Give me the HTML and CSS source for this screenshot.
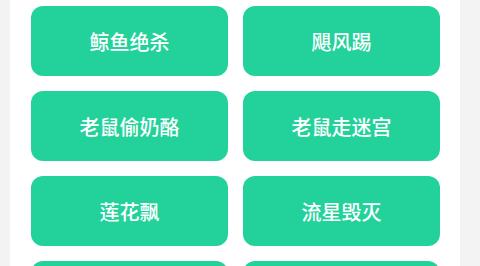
FILE: index.html
```html
<!DOCTYPE html>
<html lang="zh">
<head>
    <meta charset="UTF-8">
    <meta name="viewport" content="width=device-width, initial-scale=1.0">
    <title>动作列表</title>
    <link rel="stylesheet" href="styles.css">
</head>
<body>
    <div class="panel">
        <div class="grid">
            <button class="action">鲸鱼绝杀</button>
            <button class="action">飓风踢</button>
            <button class="action">老鼠偷奶酪</button>
            <button class="action">老鼠走迷宫</button>
            <button class="action">莲花飘</button>
            <button class="action">流星毁灭</button>
            <button class="action"></button>
            <button class="action"></button>
        </div>
    </div>
</body>
</html>
```

FILE: styles.css
```css
body {
    margin: 0;
    background-color: #f3f3f3;
    font-family: "Noto Sans CJK SC", "Noto Sans", sans-serif;
}
.panel {
    margin-left: 10px;
    width: 450px;
    min-height: 266px;
    background: #fff;
    padding: 6px 20px 0 21px;
    box-sizing: border-box;
}
.grid {
    display: grid;
    grid-template-columns: 1fr 1fr;
    gap: 15px;
}
.action {
    height: 70px;
    border: none;
    border-radius: 12px;
    background-color: #23d29a;
    color: #fff;
    font-family: inherit;
    font-size: 20px;
    font-weight: 500;
    padding: 0;
}
```
